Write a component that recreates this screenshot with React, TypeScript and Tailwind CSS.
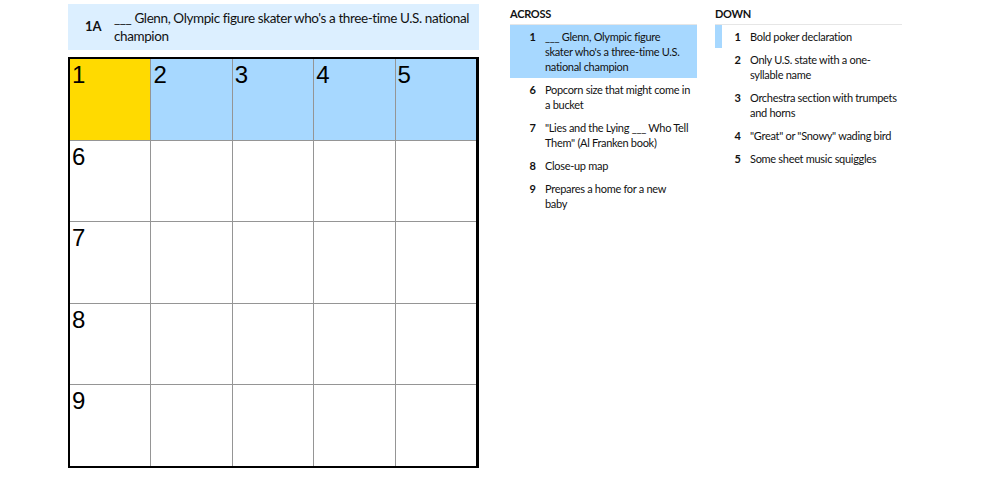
const across = [
  { n: 1, text: "___ Glenn, Olympic figure\nskater who's a three-time U.S. national champion" },
  { n: 6, text: "Popcorn size that might come in a bucket" },
  { n: 7, text: "\"Lies and the Lying ___ Who Tell Them\" (Al Franken book)" },
  { n: 8, text: "Close-up map" },
  { n: 9, text: "Prepares a home for a new\nbaby" },
];

const down = [
  { n: 1, text: "Bold poker declaration" },
  { n: 2, text: "Only U.S. state with a one-syllable name" },
  { n: 3, text: "Orchestra section with trumpets and horns" },
  { n: 4, text: "\"Great\" or \"Snowy\" wading bird" },
  { n: 5, text: "Some sheet music squiggles" },
];

const labels: Record<number, string> = { 0: "1", 1: "2", 2: "3", 3: "4", 4: "5", 5: "6", 10: "7", 15: "8", 20: "9" };

function cellColor(i: number) {
  if (i === 0) return "bg-[#ffda00]";
  if (i < 5) return "bg-[#a7d8ff]";
  return "bg-white";
}

function ClueList({
  title,
  clues,
  mode,
}: {
  title: string;
  clues: { n: number; text: string }[];
  mode: "across" | "down";
}) {
  return (
    <div className="w-[187px]">
      <h3 className="h-[21px] border-b border-[#e6e6e6] text-[11px] font-bold uppercase leading-[20px] tracking-tight text-[#121212]">
        {title}
      </h3>
      <ol>
        {clues.map((c) => {
          const active = c.n === 1;
          const bg = active && mode === "across" ? "bg-[#a7d8ff]" : "";
          const bar = active && mode === "down" ? "border-l-[7px] border-[#a7d8ff]" : "border-l-[7px] border-transparent";
          return (
            <li key={c.n} className={`flex py-[4px] ${bg} ${bar}`}>
              <span className="w-[19px] shrink-0 text-right text-[11px] font-bold leading-[15px] text-[#121212]">
                {c.n}
              </span>
              <span className="ml-[9px] whitespace-pre-line pr-[2px] text-[11px] leading-[15px] tracking-[-0.3px] text-[#121212]">
                {c.text}
              </span>
            </li>
          );
        })}
      </ol>
    </div>
  );
}

export default function App() {
  return (
    <div className="flex h-[495px] w-[1000px] bg-white pl-[68px] pt-[4px] font-['Lato',sans-serif] text-[#121212]">
      <div className="w-[411px]">
        {/* Current clue bar */}
        <div className="flex h-[46px] items-center bg-[#dcefff]">
          <span className="w-[46px] shrink-0 pl-[17px] text-[13px] font-bold">1A</span>
          <span className="pr-[8px] text-[13.5px] leading-[18px] tracking-[-0.4px]">
            ___ Glenn, Olympic figure skater who's a three-time U.S. national champion
          </span>
        </div>

        {/* Grid */}
        <div className="mt-[7px] grid h-[411px] w-[411px] grid-cols-5 grid-rows-5 gap-px border-2 border-r-[3px] border-black bg-[#959595]">
          {Array.from({ length: 25 }).map((_, i) => (
            <div key={i} className={`relative ${cellColor(i)}`}>
              {labels[i] && (
                <span className="absolute left-[2px] top-[4px] font-['Liberation_Sans',sans-serif] text-[24px] leading-none text-black">
                  {labels[i]}
                </span>
              )}
            </div>
          ))}
        </div>
      </div>

      {/* Clue lists */}
      <div className="ml-[31px] flex gap-[18px]">
        <ClueList title="Across" clues={across} mode="across" />
        <ClueList title="Down" clues={down} mode="down" />
      </div>
    </div>
  );
}
